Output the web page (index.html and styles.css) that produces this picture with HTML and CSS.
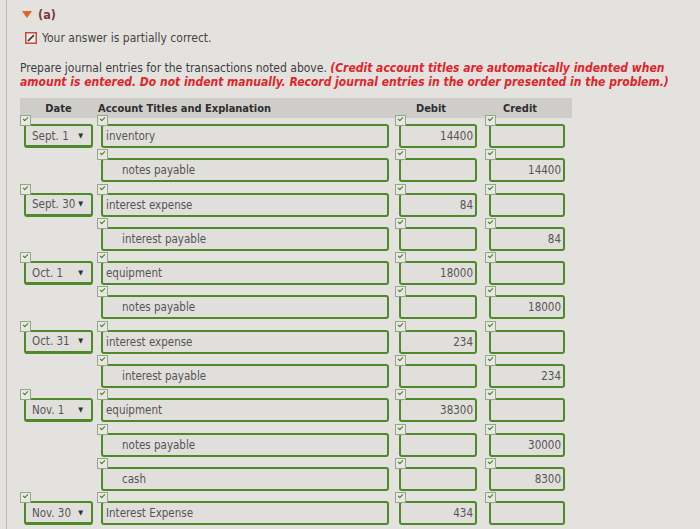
FILE: index.html
```html
<!DOCTYPE html>
<html>
<head>
<meta charset="utf-8">
<link rel="stylesheet" href="styles.css">
</head>
<body>
<div class="page">
  <div class="part-title"><span class="tri"></span><span class="part-label">(a)</span></div>
  <div class="status">
    <span class="pencil"><svg width="12" height="12" viewBox="0 0 12 12"><rect x="0.75" y="0.75" width="10.5" height="10.5" fill="#f1efec" stroke="#c9493b" stroke-width="1.5"/><path d="M3.4 8.6 L8.4 3.6" stroke="#3a3a3a" stroke-width="1.6" stroke-linecap="round"/></svg></span>
    <span>Your answer is partially correct.</span>
  </div>
  <div class="instructions">
    <div class="line"><span>Prepare journal entries for the transactions noted above.</span> <em class="warn">(Credit account titles are automatically indented when</em></div>
    <div class="line"><em class="warn">amount is entered. Do not indent manually. Record journal entries in the order presented in the problem.)</em></div>
  </div>

  <div class="head">
    <div class="h-date">Date</div>
    <div class="h-acct">Account Titles and Explanation</div>
    <div class="h-num">Debit</div>
    <div class="h-num">Credit</div>
  </div>

  <div class="rows">
    <div class="row"><div class="cell"><i class="ck"></i><div class="field sel">Sept. 1<b>▼</b></div></div><div class="cell"><i class="ck"></i><div class="field acct">inventory</div></div><div class="cell"><i class="ck"></i><div class="field num">14400</div></div><div class="cell"><i class="ck"></i><div class="field num"></div></div></div>
    <div class="row"><div class="cell"></div><div class="cell"><i class="ck"></i><div class="field acct ind">notes payable</div></div><div class="cell"><i class="ck"></i><div class="field num"></div></div><div class="cell"><i class="ck"></i><div class="field num">14400</div></div></div>
    <div class="row"><div class="cell"><i class="ck"></i><div class="field sel">Sept. 30<b>▼</b></div></div><div class="cell"><i class="ck"></i><div class="field acct">interest expense</div></div><div class="cell"><i class="ck"></i><div class="field num">84</div></div><div class="cell"><i class="ck"></i><div class="field num"></div></div></div>
    <div class="row"><div class="cell"></div><div class="cell"><i class="ck"></i><div class="field acct ind">interest payable</div></div><div class="cell"><i class="ck"></i><div class="field num"></div></div><div class="cell"><i class="ck"></i><div class="field num">84</div></div></div>
    <div class="row"><div class="cell"><i class="ck"></i><div class="field sel">Oct. 1<b>▼</b></div></div><div class="cell"><i class="ck"></i><div class="field acct">equipment</div></div><div class="cell"><i class="ck"></i><div class="field num">18000</div></div><div class="cell"><i class="ck"></i><div class="field num"></div></div></div>
    <div class="row"><div class="cell"></div><div class="cell"><i class="ck"></i><div class="field acct ind">notes payable</div></div><div class="cell"><i class="ck"></i><div class="field num"></div></div><div class="cell"><i class="ck"></i><div class="field num">18000</div></div></div>
    <div class="row"><div class="cell"><i class="ck"></i><div class="field sel">Oct. 31<b>▼</b></div></div><div class="cell"><i class="ck"></i><div class="field acct">interest expense</div></div><div class="cell"><i class="ck"></i><div class="field num">234</div></div><div class="cell"><i class="ck"></i><div class="field num"></div></div></div>
    <div class="row"><div class="cell"></div><div class="cell"><i class="ck"></i><div class="field acct ind">interest payable</div></div><div class="cell"><i class="ck"></i><div class="field num"></div></div><div class="cell"><i class="ck"></i><div class="field num">234</div></div></div>
    <div class="row"><div class="cell"><i class="ck"></i><div class="field sel">Nov. 1<b>▼</b></div></div><div class="cell"><i class="ck"></i><div class="field acct">equipment</div></div><div class="cell"><i class="ck"></i><div class="field num">38300</div></div><div class="cell"><i class="ck"></i><div class="field num"></div></div></div>
    <div class="row"><div class="cell"></div><div class="cell"><i class="ck"></i><div class="field acct ind">notes payable</div></div><div class="cell"><i class="ck"></i><div class="field num"></div></div><div class="cell"><i class="ck"></i><div class="field num">30000</div></div></div>
    <div class="row"><div class="cell"></div><div class="cell"><i class="ck"></i><div class="field acct ind">cash</div></div><div class="cell"><i class="ck"></i><div class="field num"></div></div><div class="cell"><i class="ck"></i><div class="field num">8300</div></div></div>
    <div class="row"><div class="cell"><i class="ck"></i><div class="field sel">Nov. 30<b>▼</b></div></div><div class="cell"><i class="ck"></i><div class="field acct">Interest Expense</div></div><div class="cell"><i class="ck"></i><div class="field num">434</div></div><div class="cell"><i class="ck"></i><div class="field num"></div></div></div>
  </div>
</div>
</body>
</html>
```

FILE: styles.css
```css
html, body {
  margin: 0;
  padding: 0;
  background: #e4e2df;
  height: 529px;
  overflow: hidden;
}
.page {
  margin-left: 6px;
  border-left: 1px solid #b9b7b4;
  padding-left: 13px;
  height: 529px;
  font-family: "DejaVu Sans Condensed", "DejaVu Sans", sans-serif;
  font-stretch: condensed;
  font-size: 12px;
  color: #3d3d3d;
}
.part-title {
  display: flex;
  align-items: center;
  gap: 6px;
  padding-top: 6px;
  padding-left: 2px;
  height: 17px;
}
.tri {
  width: 0;
  height: 0;
  border-left: 5px solid transparent;
  border-right: 5px solid transparent;
  border-top: 7px solid #e5621f;
}
.part-label {
  font-family: "DejaVu Sans", sans-serif;
  font-weight: bold;
  font-size: 12.5px;
  color: #7a3a34;
}
.status {
  display: flex;
  align-items: center;
  gap: 5px;
  margin-top: 8px;
  padding-left: 5px;
  font-size: 12px;
  color: #444;
}
.pencil { display: flex; }
.instructions {
  margin: 16px 0 0 0;
  line-height: 14px;
  font-size: 12px;
  color: #3d3d3d;
}
.line { white-space: nowrap; }
.warn {
  font-weight: bold;
  font-style: italic;
  color: #e0252a;
}
.head {
  display: grid;
  grid-template-columns: 75px 290px 92px 92px;
  margin-top: 9px;
  width: 552px;
  height: 20px;
  align-items: center;
  background: #cfcdca;
  font-weight: bold;
  font-size: 11px;
  color: #2e2e2e;
}
.h-date { text-align: center; padding-left: 2px; }
.h-acct { padding-left: 3px; }
.h-num { text-align: center; }
.h-num:last-child { padding-right: 6px; }
.rows {
  padding-left: 4px;
  margin-top: -2px;
}
.row {
  display: grid;
  grid-template-columns: 69px 288px 80px 80px;
  column-gap: 8px;
  height: 34.3px;
}
.row .cell:nth-child(3) { margin-left: 2px; }
.row .cell:nth-child(4) { margin-left: 4px; }
.cell {
  position: relative;
  padding-top: 8px;
}
.field {
  box-sizing: border-box;
  height: 24px;
  border: 2px solid #4f8a2a;
  border-radius: 3px;
  background: #e1dfdc;
  display: flex;
  align-items: center;
  color: #555;
  font-size: 11.5px;
  white-space: nowrap;
}
.sel {
  padding-left: 6px;
  justify-content: space-between;
  padding-right: 8px;
  border-bottom-width: 3px;
}
.sel b {
  font-size: 7px;
  color: #333;
  font-weight: normal;
}
.acct { padding-left: 3px; }
.acct.ind { padding-left: 19px; }
.num {
  justify-content: flex-end;
  padding-right: 2px;
}
.ck {
  position: absolute;
  left: -4px;
  top: -1px;
  width: 9px;
  height: 9px;
  border: 1px solid #93a884;
  background: #e9e7e4;
}
.ck::after {
  content: "";
  position: absolute;
  left: 2px;
  top: 1px;
  width: 4px;
  height: 2px;
  border-left: 1.5px solid #3f7d24;
  border-bottom: 1.5px solid #3f7d24;
  transform: rotate(-45deg);
}
```
